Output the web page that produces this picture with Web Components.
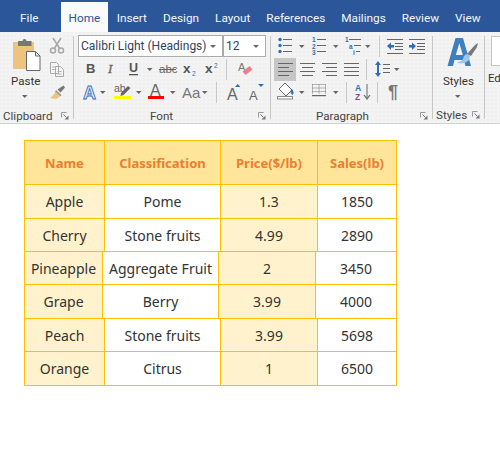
<!DOCTYPE html>
<html lang="en"><head><meta charset="utf-8"><title>Word table</title>
<style>
html,body{margin:0;padding:0;background:#fff}
body{width:500px;height:460px;overflow:hidden;display:flex;flex-direction:column;font-family:"Noto Sans","Open Sans",sans-serif}
</style></head>
<body>
<word-ribbon></word-ribbon>
<word-table>
  <table-row kind="head" h="44"><table-cell>Name</table-cell><table-cell>Classification</table-cell><table-cell>Price($/lb)</table-cell><table-cell>Sales(lb)</table-cell></table-row>
  <table-row h="34"><table-cell>Apple</table-cell><table-cell>Pome</table-cell><table-cell>1.3</table-cell><table-cell>1850</table-cell></table-row>
  <table-row h="33"><table-cell>Cherry</table-cell><table-cell>Stone fruits</table-cell><table-cell>4.99</table-cell><table-cell>2890</table-cell></table-row>
  <table-row h="33" shift><table-cell>Pineapple</table-cell><table-cell>Aggregate Fruit</table-cell><table-cell>2</table-cell><table-cell>3450</table-cell></table-row>
  <table-row h="34" shift><table-cell>Grape</table-cell><table-cell>Berry</table-cell><table-cell>3.99</table-cell><table-cell>4000</table-cell></table-row>
  <table-row h="33"><table-cell>Peach</table-cell><table-cell>Stone fruits</table-cell><table-cell>3.99</table-cell><table-cell>5698</table-cell></table-row>
  <table-row h="34"><table-cell>Orange</table-cell><table-cell>Citrus</table-cell><table-cell>1</table-cell><table-cell>6500</table-cell></table-row>
</word-table>
<script>
const BL='#2f6db5',GR='#666',DK='#555';
const T=(x,y,s,t,o='')=>`<text x="${x}" y="${y}" font-size="${s}" font-family="Liberation Sans" ${o}>${t}</text>`;
const lines=(arr,c=GR)=>arr.map(a=>`<rect x="${a[0]}" y="${a[1]}" width="${a[2]}" height="1" fill="${c}"/>`).join('');
const ICONS={
 arrow:[5,`<path d="M0 10h5.500l-2.750 3z" fill="#666"/>`],
 paste:[30,36,`<g transform="translate(0,-3)"><rect x="1" y="7" width="21" height="27" fill="#edc47f"/><path d="M6 6h4.500a2 2 0 0 1 4 0h5v5H6z" fill="#777"/><path d="M14.500 16.500h9l4.500 4.500v14.500H14.500z" fill="#fff" stroke="#666"/><path d="M23.500 16.500v4.500h4.500" fill="none" stroke="#666"/></g>`],
 cut:[16,`<path d="M4 3l7 11M12 3L5 14" stroke="#a9a9a9" stroke-width="1.600" fill="none"/><circle cx="4" cy="15.500" r="2.500" fill="none" stroke="#a9a9a9" stroke-width="1.500"/><circle cx="12" cy="15.500" r="2.500" fill="none" stroke="#a9a9a9" stroke-width="1.500"/>`],
 copy:[16,`<g transform="translate(0,-1)"><path d="M1.500 5.500h6l2 2v9h-8z M6.500 9.500h5l3 3v7h-8z" fill="#f4f4f4" stroke="#a9a9a9"/><path d="M3 10h4M3 12.500h3M8.500 14.500h4M8.500 17h4" stroke="#b5b5b5"/></g>`],
 brush:[17,`<g transform="translate(0,3)"><path d="M8.500 5.500l6-4 1.500 2-4.500 5z" fill="#777"/><path d="M7 6l5.500 5-1 1.500L6 8z" fill="#999"/><path d="M6.500 7.500l4.500 4.500C9 15 5.500 15.500 1 14c2-1 4-3 5.500-6.500z" fill="#edc47f"/></g>`],
 launch:[8,8,`<path d="M.5 5.500v-5h5" fill="none" stroke="#999"/><path d="M7.500 7.500H3.500L7.500 3.500z" fill="#777"/><path d="M2.500 2.500l3 3" stroke="#777"/>`],
 bold:[12,T(1,15,13,'B',`font-weight="700" fill="${DK}"`)],
 ital:[10,`<text x="1" y="15" font-size="13" font-family="Liberation Serif" font-style="italic" fill="#666" stroke="#666" stroke-width=".3">I</text>`],
 under:[11,T(1,14,12.500,'U',`font-weight="700" fill="${DK}"`)+`<rect x="1" y="16" width="9" height="1.300" fill="${DK}"/>`],
 strike:[17,T(0,15,11.500,'abc',`fill="#666"`)+`<rect y="11" width="17" height="1" fill="#666"/>`],
 sub:[14,T(0,15,13.500,'x',`font-weight="700" fill="${DK}"`)+T(9,18,6.500,'2',`fill="${BL}"`)],
 sup:[14,T(0,15,13.500,'x',`font-weight="700" fill="${DK}"`)+T(9,10,6.500,'2',`fill="${BL}"`)],
 erase:[16,T(1,13,11,'A',`fill="#777"`)+`<path d="M5.500 13.500l7-5.500 3 3.500-7 5.500z" fill="#ec7f8d"/>`],
 aout:[14,T(1,18,18,'A',`font-weight="700" fill="#dbe8f7" stroke="${BL}" stroke-width=".8"`)],
 high:[17,T(0,11,10.500,'ab',`fill="#666"`)+`<path d="M7 12l7-7 2.500 2-7 7-3 1z" fill="#666"/><rect y="15" width="17" height="3" fill="#ffff00"/>`],
 color:[16,T(2,15,16,'A',`fill="#666"`)+`<rect y="15" width="16" height="3" fill="#f00"/>`],
 case:[17,T(0,17,15,'Aa',`fill="#777"`)],
 grow:[14,T(0,19,16,'A',`fill="#666"`)+`<path d="M8 6l2.700-3 2.700 3z" fill="${BL}"/>`],
 shrink:[15,T(0,19,13,'A',`fill="#666"`)+`<path d="M9 3h6l-3 3z" fill="${BL}"/>`],
 sep:[1,`<rect y="1" width="1" height="21" fill="#c8c8c8"/>`],
 bullets:[14,`<circle cx="2" cy="4.500" r="1.700" fill="${BL}"/><circle cx="2" cy="10.500" r="1.700" fill="${BL}"/><circle cx="2" cy="16.500" r="1.700" fill="${BL}"/>`+lines([[5,4,9],[5,10,9],[5,16,9]])],
 numbers:[15,T(0,7,6.500,'1',`font-weight="700" fill="${BL}"`)+T(0,13.500,6.500,'2',`font-weight="700" fill="${BL}"`)+T(0,20,6.500,'3',`font-weight="700" fill="${BL}"`)+lines([[5,4,9],[5,10,9],[5,16,9]])],
 multi:[17,T(0,7,6.500,'1',`font-weight="700" fill="${BL}"`)+T(4,13.500,6.500,'a',`font-weight="700" fill="${BL}"`)+T(8,20,6.500,'i',`font-weight="700" fill="${BL}"`)+lines([[4,4,12],[9,10,7],[11,16,4]])],
 outdent:[16,lines([[0,4,16],[8,8,8],[8,11,8],[8,14,8],[0,18,16]])+`<path d="M0 11l4-3.500V10h3v2.500H4V15z" fill="${BL}"/>`],
 indent:[16,lines([[0,4,16],[8,8,8],[8,11,8],[8,14,8],[0,18,16]])+`<path d="M7 11L3 7.500V10H0v2.500h3V15z" fill="${BL}"/>`],
 left:[22,lines([[4,5,15],[4,9,11],[4,13,15],[4,17,11]],'#666')],
 center:[15,lines([[0,5,15],[2,9,11],[0,13,15],[2,17,11]])],
 right:[15,lines([[0,5,15],[4,9,11],[0,13,15],[4,17,11]])],
 just:[15,lines([[0,5,15],[0,9,15],[0,13,15],[0,17,15]])],
 spacing:[15,`<path d="M3 3l3 4H4v8h2l-3 4-3-4h2V7H0z" fill="${BL}"/>`+lines([[8,6,7],[8,10,7],[8,14,7]])],
 shade:[17,`<path d="M8 2l7 7-6 6-7-7z" fill="#fff" stroke="#666"/><path d="M14.500 8c2 2.500 2 4.500.8 5.500-1.500-1-1.500-3-.8-5.500z" fill="${BL}" stroke="${BL}"/><rect x=".5" y="15.500" width="15" height="2.500" fill="#fff" stroke="#888"/>`],
 borders:[14,`<path d="M.5 3.500h13M.5 7h13M.5 10.500h13M.5 3.500v10M7 3.500v10M13.500 3.500v10" stroke="#777" stroke-dasharray="1 1" fill="none"/><rect x="0" y="14" width="14" height="1.200" fill="#666"/>`],
 sort:[16,T(0,9.500,8.500,'A',`font-weight="700" fill="${BL}"`)+T(0,19,8.500,'Z',`font-weight="700" fill="#8b45a8"`)+`<path d="M12 3v14" stroke="#666"/><path d="M9 14l3 4 3-4" stroke="#666" fill="none" stroke-width="1.200"/>`],
 pil:[12,T(0,17,18,'¶',`fill="#777" font-weight="700"`)],
 stylesA:[32,34,`<path d="M9.500 1h7.500l8 28h-5.500l-1.500-6H8.500l-1.500 6H1.500zM9.800 18h7l-3.400-12z" fill="#3f7fbf"/><path d="M17 22c1-4 3-5 5-5l2 2c0 3-2 6-6 7-2 .5-5 1-7-1 3 0 5-1 6-3z" fill="#9fc6ea"/><path d="M21 17L29 8l3-2-1 4-6 9z" fill="#777"/>`]
};
const W=n=>ICONS[n][0], H=n=>ICONS[n].length>2?ICONS[n][1]:23, B=n=>ICONS[n].length>2?ICONS[n][2]:ICONS[n][1];
class RibbonIcon extends HTMLElement{connectedCallback(){
  if(this.shadowRoot)return;const n=this.getAttribute('name');
  this.attachShadow({mode:'open'}).innerHTML=`<style>:host{display:block;flex:none;width:${W(n)}px;height:${H(n)}px}svg{display:block;overflow:visible}</style><svg width="${W(n)}" height="${H(n)}" viewBox="0 0 ${W(n)} ${H(n)}">${B(n)}</svg>`;
}}
customElements.define('ribbon-icon',RibbonIcon);
class ToolRow extends HTMLElement{constructor(){super();this.attachShadow({mode:'open'}).innerHTML=`<style>:host{display:flex;height:23px;align-items:flex-start}</style><slot></slot>`}}
customElements.define('tool-row',ToolRow);
const row=(o,items)=>{let c=o,s='';for(const[x,n,on]of items){const st=`margin-left:${x-c}px`+(on?';background:#c6c6c6':'');
  s+=`<ribbon-icon name="${n}" style="${st}"></ribbon-icon>`;c=x+W(n);}return `<tool-row>${s}</tool-row>`};
class RibbonGroup extends HTMLElement{constructor(){super();
  this.attachShadow({mode:'open'}).innerHTML=`<style>
  :host{display:flex;flex-direction:column;flex:none;box-sizing:border-box;height:88px;background:linear-gradient(#c6c6c6,#c6c6c6) right 1px/1px 83px no-repeat}
  .body{height:69px;display:block}
  .foot{display:block;font-size:11.600px;line-height:16px;color:#444;height:16px;margin-top:4px}
  </style><div class="body"><slot></slot></div><div class="foot"><slot name="label"></slot></div>`}
}
customElements.define('ribbon-group',RibbonGroup);
class RibbonTabs extends HTMLElement{constructor(){super();
  const tabs=['File','Home','Insert','Design','Layout','References','Mailings','Review','View'];
  this.attachShadow({mode:'open'}).innerHTML=`<style>
  :host{display:flex;height:32px;background:#2b579a;box-sizing:border-box;padding-left:12px;color:#f3f6fb;font:11.800px Roboto,sans-serif}
  span{display:block;padding:9px 8px 0;line-height:19px;height:23px}
  span:first-of-type{margin-right:14.500px}
  .on{background:#fafafa;color:#2b579a;margin-top:2px;padding:7px 7.500px 0;height:23px;margin-right:1px}
  </style>${tabs.map(t=>`<span class="${t=='Home'?'on':''}">${t}</span>`).join('')}`}}
customElements.define('ribbon-tabs',RibbonTabs);
class WordCombo extends HTMLElement{constructor(){super();
  this.attachShadow({mode:'open'}).innerHTML=`<style>
  :host{display:flex;align-items:center;flex:none;box-sizing:border-box;height:22px;border:1px solid #ababab;background:#fff;font:12px Roboto,sans-serif;color:#33415c;padding:0 6px 0 2px;justify-content:space-between;white-space:nowrap}
  i{display:block;width:0;height:0;border:3px solid transparent;border-top-color:#666;border-bottom:0}
  </style><slot></slot><i></i>`}}
customElements.define('word-combo',WordCombo);
class WordRibbon extends HTMLElement{constructor(){super();
  const lab=(t,ml)=>`<span slot="label" style="display:flex;align-items:center"><span style="margin-left:${ml}px;">${t}</span><ribbon-icon name="launch" style="margin-left:auto;margin-right:5px"></ribbon-icon></span>`;
  this.attachShadow({mode:'open'}).innerHTML=`<style>
  :host{display:block;flex:none;height:124px;box-sizing:border-box;font-family:Roboto,sans-serif}
  .bar{display:flex;height:92px;box-sizing:border-box;padding-top:3px;border-bottom:1px solid #d2d2d2;background-color:#f1f1f1;background-image:radial-gradient(#fbfbfb .6px,transparent .8px);background-size:4px 4px}
  .pasterow{display:flex}
  .col{display:block;margin-left:16px}
  .pastecol{display:flex;flex-direction:column;align-items:flex-start;width:33px}
  .big{display:block;font-size:11.500px;color:#333;line-height:16px;margin-top:-1px;margin-left:11px}
  .edit{flex:1;min-width:0;font-size:11.500px;color:#333}
  .ebox{width:15px;height:30px;margin:1px 0 0 6px;background:#fff;border:1px solid #c6c6c6;border-right:0;box-sizing:border-box}
  .edit span{display:block;margin:4px 0 0 3px;line-height:16px;white-space:nowrap;letter-spacing:-.3px}
  </style>
  <ribbon-tabs></ribbon-tabs>
  <div class="bar">
    <ribbon-group style="width:74px">
      <div class="pasterow">
        <div class="pastecol">
          <ribbon-icon name="paste" style="margin-left:12px;margin-top:3px"></ribbon-icon>
          <span class="big">Paste</span>
          <ribbon-icon name="arrow" style="margin-left:21.500px;height:8px;margin-top:-4px"></ribbon-icon>
        </div>
        <div class="col">
          <ribbon-icon name="cut"></ribbon-icon>
          <ribbon-icon name="copy"></ribbon-icon>
          <ribbon-icon name="brush"></ribbon-icon>
        </div>
      </div>
      ${lab('Clipboard',3)}
    </ribbon-group>
    <ribbon-group style="width:197px">
      <tool-row><word-combo style="width:145px;margin-left:4px">Calibri Light (Headings)</word-combo><word-combo style="width:43px">12</word-combo></tool-row>
      ${row(74,[[85,'bold'],[107,'ital'],[128,'under'],[147,'arrow'],[159,'strike'],[183,'sub'],[205,'sup'],[226,'sep'],[237,'erase']])}
      ${row(74,[[82,'aout'],[100,'arrow'],[114,'high'],[136,'arrow'],[148,'color'],[170,'arrow'],[182,'case'],[202,'arrow'],[216,'sep'],[227,'grow'],[249,'shrink']])}
      ${lab('Font',76)}
    </ribbon-group>
    <ribbon-group style="width:162px">
      ${row(271,[[278,'bullets'],[299,'arrow'],[312,'numbers'],[333,'arrow'],[345,'multi'],[365,'arrow'],[379,'sep'],[387,'outdent'],[409,'indent']])}
      ${row(271,[[274,'left',1],[300,'center'],[322,'right'],[344,'just'],[366,'sep'],[375,'spacing'],[394,'arrow']])}
      ${row(271,[[277,'shade'],[299,'arrow'],[312,'borders'],[333,'arrow'],[346,'sep'],[355,'sort'],[377,'sep'],[388,'pil']])}
      ${lab('Paragraph',45)}
    </ribbon-group>
    <ribbon-group style="width:52px">
      <ribbon-icon name="stylesA" style="margin-left:13px;margin-top:2px"></ribbon-icon>
      <span class="big" style="margin:2px 0 0 10px">Styles</span>
      <ribbon-icon name="arrow" style="margin-left:22px;height:8px;margin-top:-4px"></ribbon-icon>
      ${lab('Styles',3)}
    </ribbon-group>
    <div class="edit"><div class="ebox"></div><span>Ed</span></div>
  </div>`}}
customElements.define('word-ribbon',WordRibbon);
class WordTable extends HTMLElement{constructor(){super();
  this.attachShadow({mode:'open'}).innerHTML=`<style>:host{display:block;flex:none;width:373px;margin:16px 0 0 24px;border-top:1px solid #ffc000;font:14px "Noto Sans",sans-serif;color:#333}</style><slot></slot>`}}
customElements.define('word-table',WordTable);
class TableRow extends HTMLElement{constructor(){super();
  const h=this.getAttribute('h'),cols=this.hasAttribute('shift')?'78px 116px 97px 81px':'80px 116px 97px 79px';
  const head=this.getAttribute('kind')=='head';
  this.attachShadow({mode:'open'}).innerHTML=`<style>:host{display:grid;grid-template-columns:${cols};height:${h}px;box-sizing:border-box;border-left:1px solid #ffc000;font-weight:${head?700:400};font-size:${head?13:14}px;color:${head?'#ed7d31':'inherit'}}
  ::slotted(table-cell:nth-child(odd)){--fill:${head?'#ffe599':'#fff2cc'}}
  ::slotted(table-cell:nth-child(even)){--fill:${head?'#ffe599':'#fff'}}
  </style><slot></slot>`}}
customElements.define('table-row',TableRow);
class TableCell extends HTMLElement{constructor(){super();
  this.attachShadow({mode:'open'}).innerHTML=`<style>:host{display:flex;align-items:center;justify-content:center;box-sizing:border-box;border-right:1px solid #ffc000;border-bottom:1px solid #ffc000;background:var(--fill,#fff);white-space:nowrap;min-width:0}</style><slot></slot>`}}
customElements.define('table-cell',TableCell);
</script>
</body></html>
